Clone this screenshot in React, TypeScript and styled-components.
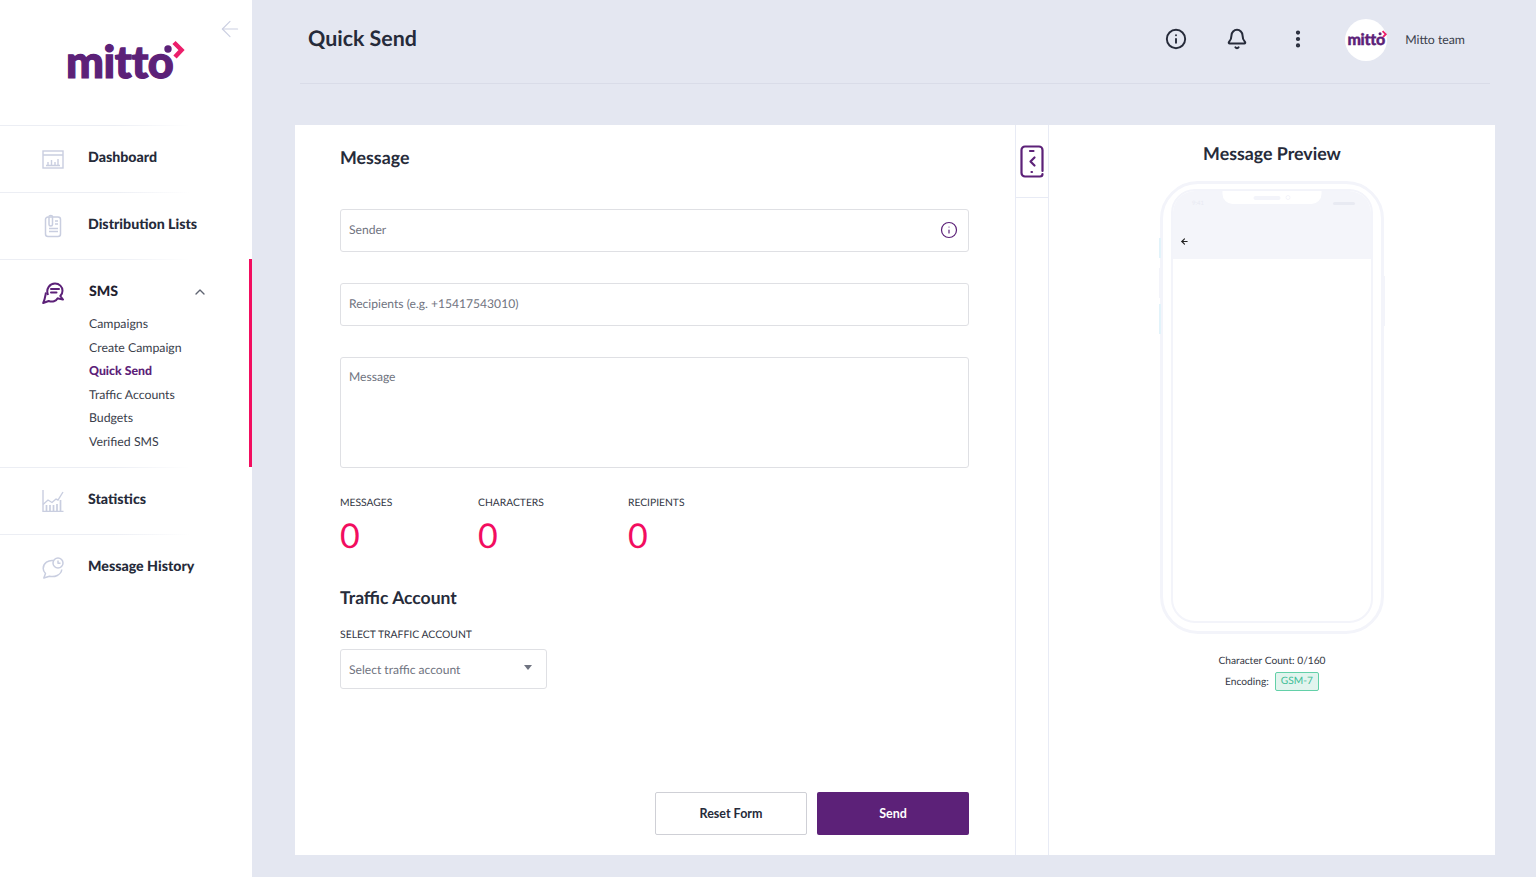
import React from "react";
import styled, { createGlobalStyle } from "styled-components";
import { ArrowLeft, Bell, ChevronUp, Info, MoreVertical } from "lucide-react";

const GlobalStyle = createGlobalStyle`
  html, body {
    margin: 0;
    height: 100%;
    background: #e4e7f1;
    font-family: "Lato", "Open Sans", sans-serif;
    color: #262b3a;
    text-rendering: geometricPrecision;
    -webkit-font-smoothing: antialiased;
  }
  * {
    box-sizing: border-box;
  }
`;

const Logo: React.FC<{ small?: boolean }> = ({ small }) => (
  <LogoWrap $small={small}>
    <LogoText $small={small}>mitto</LogoText>
    <LogoMark $small={small} viewBox="0 0 24 24">
      <circle cx="5" cy="9" r="3.7" fill="#5c2178" />
      <path d="M11 2.500L18.500 10 12 17" fill="none" stroke="#ec1f6b" strokeWidth="4.5" />
    </LogoMark>
  </LogoWrap>
);

const DashboardIcon = () => (
  <svg width="22" height="19" viewBox="0 0 22 19" fill="none" stroke="#c9cee0" strokeWidth="1.4">
    <rect x="1" y="1" width="20" height="17" />
    <path d="M1 5h20M6 15v-3M9.500 15v-5M13 15v-3M16 15v-6M4 15.500h14" />
  </svg>
);

const ListIcon = () => (
  <svg width="18" height="24" viewBox="0 0 18 24" fill="none" stroke="#c9cee0" strokeWidth="1.5">
    <path d="M4 3h10a2.500 2.500 0 0 1 2.500 2.500V20a2.500 2.500 0 0 1-2.500 2.500H4A2.500 2.500 0 0 1 1.500 20V5.500A2.500 2.500 0 0 1 4 3z" />
    <path d="M5 3v7.500c0 2 3.500 2 3.500 0V2.500c0-1.500-3.500-1.500-3.500 0M11 7h3M11 10h3M5 14.500h9M5 17.500h9" />
  </svg>
);

const SmsIcon = () => (
  <svg width="22" height="22" viewBox="0 0 22 22" fill="none" stroke="#5c2178" strokeWidth="2" strokeLinejoin="round">
    <path d="M6 13C3.500 6.500 8 1.500 13 1.500c4.300 0 7.500 3.300 7.500 7.200 0 2.300-.9 4-2.200 5.300l2.700 3.500-6-1.300" />
    <path d="M4 10.500C3.300 14 2.800 18 1.200 21l5.500-2c3.500 1.300 7.600.4 9-2.800" />
    <path d="M9 7h8M9 10.500h5.500" strokeLinecap="round" />
  </svg>
);

const StatsIcon = () => (
  <svg width="22" height="22" viewBox="0 0 22 22" fill="none" stroke="#c9cee0" strokeWidth="1.4">
    <path d="M1 0v21.500h20.500" />
    <path d="M1 14.500l5-4.500 4 2.500 4-3.500 2 1 5-8" />
    <path d="M4.500 21v-6M8 21v-6M11.500 21v-6M15 21v-7M18.500 21V10" strokeWidth="1.7" />
  </svg>
);

const HistoryIcon = () => (
  <svg width="22" height="22" viewBox="0 0 22 22" fill="none" stroke="#c9cee0" strokeWidth="1.5" strokeLinejoin="round">
    <path d="M11.500 3.500C6.500 2.800 1.200 6 1.200 11.500c0 2 .8 3.600 2.300 5L1.800 21l5.700-1.800c5 1.300 11.500-1 12.300-6.700" />
    <circle cx="16" cy="6" r="5" />
    <path d="M16 3.500v2.800h2.500" />
  </svg>
);

const PhoneToggleIcon = () => (
  <svg width="24" height="33" viewBox="0 0 24 33" fill="none" stroke="#5c2178" strokeWidth="2.200" strokeLinecap="round" strokeLinejoin="round">
    <path d="M19 1.500H5A3.500 3.500 0 0 0 1.500 5v23A3.500 3.500 0 0 0 5 31.500h15a2.500 2.500 0 0 0 2.500-2.500M22.500 26V5A3.500 3.500 0 0 0 19 1.500" />
    <path d="M10 6h3.500M14.500 12.500L10.500 16.500l4 4" />
    <path d="M11.500 27h.5" />
  </svg>
);

const navSubItems = [
  { label: "Campaigns" },
  { label: "Create Campaign" },
  { label: "Quick Send", active: true },
  { label: "Traffic Accounts" },
  { label: "Budgets" },
  { label: "Verified SMS" },
];

const App: React.FC = () => {
  return (
    <Page>
      <GlobalStyle />
      <Sidebar>
        <LogoArea>
          <Logo />
          <CollapseButton>
            <ArrowLeft size={26} strokeWidth={1.1} />
          </CollapseButton>
        </LogoArea>
        <NavSection>
          <NavRow>
            <NavIcon><DashboardIcon /></NavIcon>
            <NavLabel>Dashboard</NavLabel>
          </NavRow>
        </NavSection>
        <NavSection>
          <NavRow>
            <NavIcon><ListIcon /></NavIcon>
            <NavLabel>Distribution Lists</NavLabel>
          </NavRow>
        </NavSection>
        <NavSection $open>
          <NavRow>
            <NavIcon><SmsIcon /></NavIcon>
            <NavLabel $open>SMS</NavLabel>
            <Caret><ChevronUp size={16} strokeWidth={2} /></Caret>
          </NavRow>
          <SubList>
            {navSubItems.map((item) => (
              <SubItem key={item.label} $active={item.active}>{item.label}</SubItem>
            ))}
          </SubList>
        </NavSection>
        <NavSection>
          <NavRow>
            <NavIcon><StatsIcon /></NavIcon>
            <NavLabel>Statistics</NavLabel>
          </NavRow>
        </NavSection>
        <NavSection>
          <NavRow>
            <NavIcon><HistoryIcon /></NavIcon>
            <NavLabel>Message History</NavLabel>
          </NavRow>
        </NavSection>
      </Sidebar>

      <Main>
        <Header>
          <PageTitle>Quick Send</PageTitle>
          <HeaderActions>
            <HeaderIcon><Info size={24} strokeWidth={2.100} /></HeaderIcon>
            <HeaderIcon><Bell size={24} strokeWidth={2.200} /></HeaderIcon>
            <HeaderIcon><MoreVertical size={24} strokeWidth={2.600} /></HeaderIcon>
            <Avatar><Logo small /></Avatar>
            <UserName>Mitto team</UserName>
          </HeaderActions>
        </Header>

        <Card>
          <FormPane>
            <SectionTitle>Message</SectionTitle>
            <Field $height={43} $mt={41}>
              <Placeholder>Sender</Placeholder>
              <FieldIcon><Info size={18} strokeWidth={1.6} /></FieldIcon>
            </Field>
            <Field $height={43} $mt={31}>
              <Placeholder>Recipients (e.g. +15417543010)</Placeholder>
            </Field>
            <Field $height={111} $mt={31} $top>
              <Placeholder>Message</Placeholder>
            </Field>
            <Counters>
              <Counter $width={138}>
                <CounterLabel>MESSAGES</CounterLabel>
                <CounterValue>0</CounterValue>
              </Counter>
              <Counter $width={150}>
                <CounterLabel>CHARACTERS</CounterLabel>
                <CounterValue>0</CounterValue>
              </Counter>
              <Counter $width={100}>
                <CounterLabel>RECIPIENTS</CounterLabel>
                <CounterValue>0</CounterValue>
              </Counter>
            </Counters>
            <SubTitle>Traffic Account</SubTitle>
            <SelectLabel>SELECT TRAFFIC ACCOUNT</SelectLabel>
            <SelectBox>
              <Placeholder>Select traffic account</Placeholder>
              <SelectArrow />
            </SelectBox>
            <Actions>
              <ResetButton>Reset Form</ResetButton>
              <SendButton>Send</SendButton>
            </Actions>
          </FormPane>

          <ToggleStrip>
            <ToggleCell><PhoneToggleIcon /></ToggleCell>
          </ToggleStrip>

          <PreviewPane>
            <PreviewTitle>Message Preview</PreviewTitle>
            <Phone>
              <SideKey $side="left" $top={54} $height={20} $blue />
              <SideKey $side="left" $top={84} $height={30} />
              <SideKey $side="left" $top={120} $height={30} $blue />
              <SideKey $side="right" $top={92} $height={50} />
              <Screen>
                <Notch>
                  <Speaker />
                  <Camera />
                </Notch>
                <ScreenHead>
                  <StatusTime>9:41</StatusTime>
                  <StatusDots />
                  <ArrowLeft size={9} strokeWidth={3} color="#222" />
                </ScreenHead>
              </Screen>
            </Phone>
            <PreviewMeta>Character Count: 0/160</PreviewMeta>
            <EncodingRow>
              Encoding:
              <EncodingBadge>GSM-7</EncodingBadge>
            </EncodingRow>
          </PreviewPane>
        </Card>
      </Main>
    </Page>
  );
};

export default App;

const Page = styled.div`
  display: flex;
  width: 100%;
  height: 877px;
  overflow: hidden;
`;

const Sidebar = styled.aside`
  width: 252px;
  flex-shrink: 0;
  background: #fff;
  display: flex;
  flex-direction: column;
`;

const LogoArea = styled.div`
  height: 125px;
  position: relative;
  padding: 41px 0 0 66px;
`;

const CollapseButton = styled.div`
  position: absolute;
  top: 16px;
  left: 217px;
  color: #ccd0e2;
  display: flex;
`;

const LogoWrap = styled.div<{ $small?: boolean }>`
  display: inline-flex;
  align-items: flex-start;
  position: relative;
  height: ${(p) => (p.$small ? "16px" : "40px")};
`;

const LogoText = styled.span<{ $small?: boolean }>`
  font-family: "Lato", sans-serif;
  font-weight: 900;
  color: #5c2178;
  font-size: ${(p) => (p.$small ? "16px" : "45px")};
  letter-spacing: ${(p) => (p.$small ? "-0.3px" : "-0.4px")};
  line-height: ${(p) => (p.$small ? "16px" : "40px")};
  -webkit-text-stroke: ${(p) => (p.$small ? "0.4px" : "1.2px")} #5c2178;
`;

const LogoMark = styled.svg<{ $small?: boolean }>`
  position: absolute;
  left: ${(p) => (p.$small ? "31px" : "97px")};
  top: ${(p) => (p.$small ? "-2px" : "-1px")};
  width: ${(p) => (p.$small ? "10px" : "24px")};
  height: ${(p) => (p.$small ? "10px" : "24px")};
`;

const NavSection = styled.div<{ $open?: boolean }>`
  position: relative;
  padding-bottom: ${(p) => (p.$open ? "13px" : "0")};
  border-right: 3px solid ${(p) => (p.$open ? "#f20d5f" : "transparent")};

  &::before {
    content: "";
    display: block;
    height: 1px;
    background: linear-gradient(to right, #eceef4 60%, #fff);
    width: 190px;
  }
`;

const NavRow = styled.div`
  display: flex;
  align-items: center;
  height: 66px;
  padding-left: 41px;
`;

const NavIcon = styled.div`
  width: 23px;
  display: flex;
  justify-content: center;
  margin-right: 24px;
`;

const NavLabel = styled.span<{ $open?: boolean }>`
  font-size: 14.200px;
  font-weight: 900;
  margin-bottom: 3px;
  color: ${(p) => (p.$open ? "#1f2230" : "#262b3a")};
  margin-left: ${(p) => (p.$open ? "1px" : "0")};
`;

const Caret = styled.div`
  margin-left: auto;
  margin-right: 41px;
  margin-bottom: 2px;
  display: flex;
  color: #5f6472;
`;

const SubList = styled.div`
  margin-top: -14px;
  padding-left: 89px;
  display: flex;
  flex-direction: column;
`;

const SubItem = styled.div<{ $active?: boolean }>`
  height: 23.600px;
  line-height: 23.600px;
  font-size: 12.300px;
  font-weight: ${(p) => (p.$active ? 900 : 400)};
  color: ${(p) => (p.$active ? "#5c2178" : "#3a3e4b")};
`;

const Main = styled.main`
  flex: 1;
  min-width: 0;
  padding: 0 41px 22px 43px;
  display: flex;
  flex-direction: column;
`;

const Header = styled.header`
  height: 84px;
  margin-left: 5px;
  margin-right: 5px;
  padding: 0 25px 8px 8px;
  display: flex;
  align-items: center;
  justify-content: space-between;
  border-bottom: 1px solid #d9dce8;
`;

const PageTitle = styled.h1`
  margin: 0;
  font-size: 21.400px;
  font-weight: 700;
  color: #262b3a;
`;

const HeaderActions = styled.div`
  display: flex;
  align-items: center;
  margin-top: 4px;
`;

const HeaderIcon = styled.div`
  width: 22px;
  display: flex;
  justify-content: center;
  margin-right: 39px;
  margin-bottom: 2px;
  color: #262b3a;
`;

const Avatar = styled.div`
  width: 42px;
  height: 42px;
  border-radius: 50%;
  background: #fff;
  margin-left: -3px;
  margin-right: 18px;
  display: flex;
  align-items: center;
  justify-content: center;
`;

const UserName = styled.span`
  font-size: 12.300px;
  color: #3a3e4b;
`;

const Card = styled.section`
  margin-top: 41px;
  height: 730px;
  background: #fff;
  display: flex;
`;

const FormPane = styled.div`
  width: 720px;
  padding: 21px 46px 0 45px;
  display: flex;
  flex-direction: column;
`;

const SectionTitle = styled.h2`
  margin: 0;
  font-size: 17.800px;
  font-weight: 700;
  line-height: 22px;
  color: #262b3a;
`;

const Field = styled.div<{ $height: number; $mt: number; $top?: boolean }>`
  height: ${(p) => p.$height}px;
  margin-top: ${(p) => p.$mt}px;
  border: 1px solid #dfe0e4;
  border-radius: 3px;
  padding: ${(p) => (p.$top ? "11px" : "0")} 10px 2px 8px;
  display: flex;
  align-items: ${(p) => (p.$top ? "flex-start" : "center")};
  justify-content: space-between;
`;

const Placeholder = styled.span`
  font-size: 12.100px;
  color: #6f7380;
`;

const FieldIcon = styled.div`
  display: flex;
  color: #5c2178;
`;

const Counters = styled.div`
  margin-top: 28px;
  display: flex;
`;

const Counter = styled.div<{ $width: number }>`
  width: ${(p) => p.$width}px;
`;

const CounterLabel = styled.div`
  font-size: 10.300px;
  line-height: 14px;
  color: #333744;
`;

const CounterValue = styled.div`
  margin-top: 6px;
  font-size: 34px;
  line-height: 40px;
  color: #f20d5f;
`;

const SubTitle = styled.h3`
  margin: 30px 0 0;
  font-size: 17.500px;
  font-weight: 700;
  line-height: 24px;
  color: #262b3a;
`;

const SelectLabel = styled.div`
  margin-top: 18px;
  font-size: 10.400px;
  line-height: 14px;
  color: #333744;
`;

const SelectBox = styled.div`
  position: relative;
  width: 207px;
  height: 40px;
  margin-top: 7px;
  border: 1px solid #dfe0e4;
  border-radius: 3px;
  padding: 0 8px;
  display: flex;
  align-items: center;
`;

const SelectArrow = styled.div`
  position: absolute;
  right: 14px;
  top: 15px;
  width: 0;
  height: 0;
  border-left: 4.500px solid transparent;
  border-right: 4.500px solid transparent;
  border-top: 5px solid #6f7380;
`;

const Actions = styled.div`
  margin-top: auto;
  margin-bottom: 20px;
  display: flex;
  justify-content: flex-end;
  gap: 10px;
`;

const ResetButton = styled.button`
  width: 152px;
  height: 43px;
  border: 1px solid #cfd0d6;
  border-radius: 2px;
  background: #fff;
  font-family: inherit;
  font-size: 12.500px;
  font-weight: 700;
  color: #262b3a;
`;

const SendButton = styled.button`
  width: 152px;
  height: 43px;
  border: none;
  border-radius: 2px;
  background: #5c2178;
  font-family: inherit;
  font-size: 12.500px;
  font-weight: 700;
  color: #fff;
`;

const ToggleStrip = styled.div`
  width: 34px;
  border-left: 1px solid #e8ebf5;
  border-right: 1px solid #e8ebf5;
`;

const ToggleCell = styled.div`
  height: 73px;
  border-bottom: 1px solid #e8ebf5;
  display: flex;
  justify-content: center;
  padding-top: 20px;
`;

const PreviewPane = styled.div`
  flex: 1;
  display: flex;
  flex-direction: column;
  align-items: center;
`;

const PreviewTitle = styled.h2`
  margin: 17px 0 0;
  font-size: 17.800px;
  font-weight: 700;
  line-height: 22px;
  color: #262b3a;
`;

const Phone = styled.div`
  position: relative;
  width: 224px;
  height: 453px;
  margin-top: 17px;
  border: 3px solid #f3f4fa;
  border-radius: 38px;
  padding: 5px 8px 8px;
`;

const SideKey = styled.div<{ $side: "left" | "right"; $top: number; $height: number; $blue?: boolean }>`
  position: absolute;
  ${(p) => p.$side}: -4px;
  top: ${(p) => p.$top}px;
  width: 2px;
  height: ${(p) => p.$height}px;
  background: ${(p) => (p.$blue ? "#e2f3fa" : "#f3f4fa")};
`;

const Screen = styled.div`
  position: relative;
  height: 100%;
  border: 2px solid #f3f4fa;
  border-radius: 24px;
  overflow: hidden;
`;

const Notch = styled.div`
  position: absolute;
  top: 0;
  left: 50%;
  transform: translateX(-50%);
  width: 99px;
  height: 13px;
  background: #fff;
  border-radius: 0 0 10px 10px;
  display: flex;
  align-items: center;
  justify-content: center;
  gap: 5px;
  z-index: 1;
`;

const Speaker = styled.div`
  width: 27px;
  height: 4px;
  border-radius: 2px;
  background: #f3f4fa;
`;

const Camera = styled.div`
  width: 5px;
  height: 5px;
  border: 1px solid #f3f4fa;
  border-radius: 50%;
`;

const ScreenHead = styled.div`
  position: relative;
  height: 68px;
  background: #f4f5fa;
  padding: 46px 0 0 7px;
  display: flex;
`;

const StatusTime = styled.span`
  position: absolute;
  top: 9px;
  left: 19px;
  font-size: 6px;
  line-height: 8px;
  color: #e8eaf2;
`;

const StatusDots = styled.div`
  position: absolute;
  top: 11px;
  right: 16px;
  width: 22px;
  height: 3px;
  border-radius: 2px;
  background: #e8eaf2;
`;

const PreviewMeta = styled.div`
  margin-top: 20px;
  font-size: 10.200px;
  line-height: 14px;
  color: #333744;
`;

const EncodingRow = styled.div`
  margin-top: 4px;
  display: flex;
  align-items: center;
  gap: 6px;
  font-size: 10.200px;
  color: #333744;
`;

const EncodingBadge = styled.span`
  height: 19px;
  line-height: 17px;
  padding: 0 5px;
  border: 1px solid #63d0a8;
  border-radius: 2px;
  background: #e2f4ee;
  color: #3dbd95;
`;
